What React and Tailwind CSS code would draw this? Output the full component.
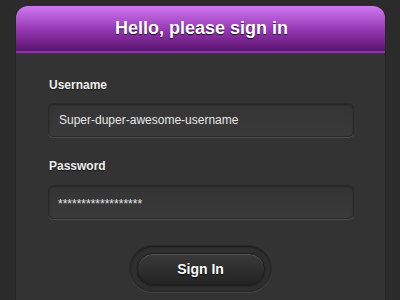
export default function App() {
  return (
    <div
      className="w-[400px] h-[300px] overflow-hidden bg-[#2b2b2b] pt-[6px] pl-[15px]"
      style={{ fontFamily: '"Liberation Sans", Arial, sans-serif' }}
    >
      <div className="w-[371px] h-[320px] bg-[#333333] rounded-t-[12px] border-l border-r border-[#262626]">
        <div className="h-[47px] rounded-t-[12px] bg-gradient-to-b from-[#cf78f2] via-[#9a3ab8] to-[#5b136f] border-b-2 border-[#8a3aa4] flex items-center justify-center">
          <h1 className="text-white font-bold text-[18px] [text-shadow:0_1px_1px_rgba(0,0,0,0.8)] pb-[1px] pl-[2px]">
            Hello, please sign in
          </h1>
        </div>
        <div className="pl-[32px] pr-[31px] pt-[25px]">
          <label className="block text-[12px] font-bold text-[#eeeeee] leading-[14px] pl-[1px] [text-shadow:0_1px_1px_rgba(0,0,0,0.6)]">
            Username
          </label>
          <div className="mt-[11px] h-[34px] rounded-[5px] bg-gradient-to-b from-[#343434] to-[#3a3a3a] border border-[#2a2a2a] shadow-[inset_0_1px_2px_rgba(0,0,0,0.35),0_1px_0_rgba(255,255,255,0.12)] flex items-center pl-[10px] text-[12px] text-[#e6e6e6]">
            Super-duper-awesome-username
          </div>
          <label className="block mt-[22px] text-[12px] font-bold text-[#eeeeee] leading-[14px] pl-[1px] [text-shadow:0_1px_1px_rgba(0,0,0,0.6)]">
            Password
          </label>
          <div className="mt-[12px] h-[34px] rounded-[5px] bg-gradient-to-b from-[#343434] to-[#3a3a3a] border border-[#2a2a2a] shadow-[inset_0_1px_2px_rgba(0,0,0,0.35),0_1px_0_rgba(255,255,255,0.12)] flex items-center pl-[9px] pt-[3px] text-[12px] text-[#e6e6e6]">
            ******************
          </div>
          <div className="flex justify-center mt-[26px] pr-[1px]">
            <div className="w-[143px] h-[47px] rounded-full bg-[#2f2f2f] border border-[#282828] shadow-[inset_0_1px_2px_rgba(0,0,0,0.5),0_1px_0_rgba(255,255,255,0.08)] flex items-center justify-center">
              <button className="w-[128px] h-[32px] rounded-full bg-gradient-to-b from-[#3a3a3a] to-[#232323] border border-[#1e1e1e] shadow-[inset_0_1px_0_rgba(255,255,255,0.15),0_1px_2px_rgba(0,0,0,0.5)] text-white font-bold text-[14px] pt-[1px] [text-shadow:0_1px_1px_rgba(0,0,0,0.9)]">
                Sign In
              </button>
            </div>
          </div>
        </div>
      </div>
    </div>
  );
}
